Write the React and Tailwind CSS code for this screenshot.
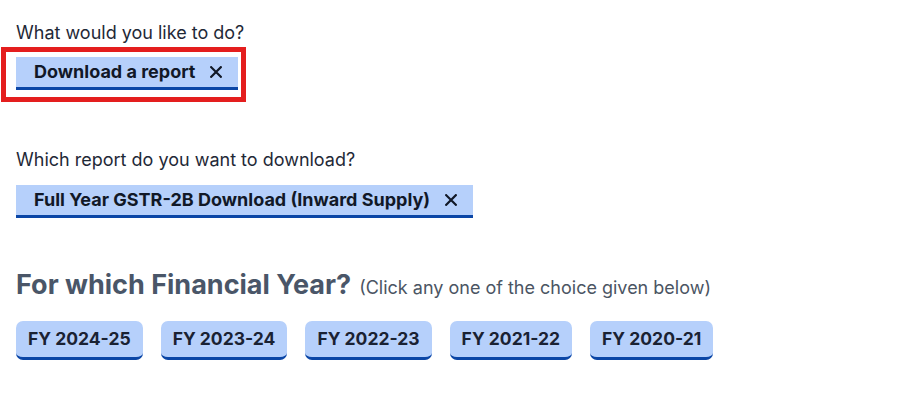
import React from "react";

function XIcon() {
  return (
    <svg width="12" height="12" viewBox="0 0 12 12" className="shrink-0">
      <path d="M1.2 1.2 L10.8 10.8 M10.8 1.2 L1.2 10.8" stroke="#111827" strokeWidth="2.2" strokeLinecap="square" />
    </svg>
  );
}

function Chip({ children }) {
  return (
    <div className="inline-flex items-center gap-[15px] bg-[#b6d0fb] border-b-[3px] border-[#0b46a6] pl-[18px] pr-[16px] h-[33px] text-[18px] font-bold text-[#111827] leading-[24px]">
      <span>{children}</span>
      <XIcon />
    </div>
  );
}

const years = ["FY 2024-25", "FY 2023-24", "FY 2022-23", "FY 2021-22", "FY 2020-21"];

export default function App() {
  return (
    <div className="w-[908px] h-[420px] bg-white font-['Inter',sans-serif] pl-[16px] pt-[21px]">
      <div className="text-[18px] text-[#1f2937] leading-[24px]">What would you like to do?</div>
      <div className="mt-[2px] -ml-[15px] flex">
        <div className="border-[5px] border-[#e41e1e] pl-[10px] pr-[3px] pt-[5px] pb-[7px]">
          <Chip>Download a report</Chip>
        </div>
      </div>
      <div className="mt-[46px] text-[18px] text-[#1f2937] leading-[24px]">Which report do you want to download?</div>
      <div className="mt-[13px] flex">
        <Chip>Full Year GSTR-2B Download (Inward Supply)</Chip>
      </div>
      <div className="mt-[50px] flex items-baseline gap-[8px] leading-[34px]">
        <span className="text-[27px] font-bold text-[#4a5668]">For which Financial Year?</span>
        <span className="text-[18px] text-[#4b5563]">(Click any one of the choice given below)</span>
      </div>
      <div className="mt-[16px] flex gap-[18px]">
        {years.map((y) => (
          <div key={y} className="h-[39px] px-[12px] flex items-center rounded-[7px] bg-[#b6d0fb] border-b-[3px] border-[#0b46a6] text-[17.5px] font-bold text-[#1a2233]">
            {y}
          </div>
        ))}
      </div>
    </div>
  );
}
